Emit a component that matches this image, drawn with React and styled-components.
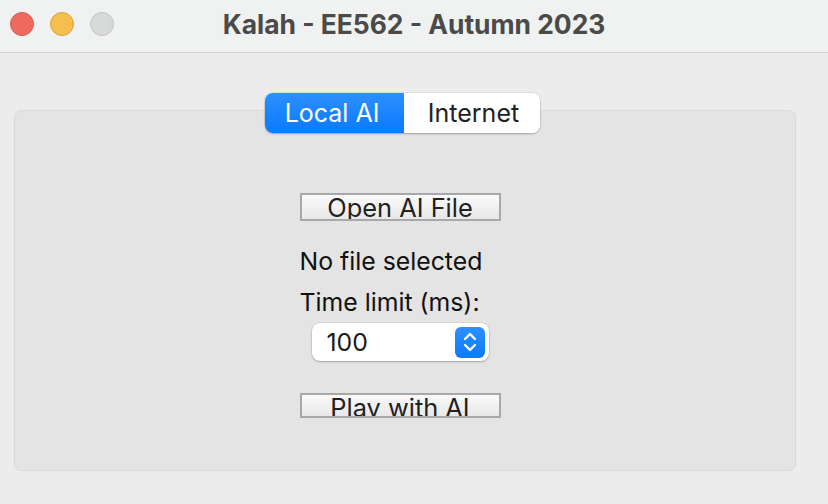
import React from "react";
import styled, { createGlobalStyle } from "styled-components";

const Global = createGlobalStyle`
  html, body { margin: 0; padding: 0; }
  body { background: #ececec; font-family: Inter, "Noto Sans", sans-serif; }
`;

const Win = styled.div`
  width: 828px;
  height: 504px;
  display: flex;
  flex-direction: column;
  background: #ececec;
  overflow: hidden;
`;

const TitleBar = styled.div`
  flex: none;
  display: grid;
  grid-template-columns: 1fr auto 1fr;
  align-items: center;
  padding-bottom: 4px;
  box-sizing: border-box;
  background: #f0f1f1;
  border-bottom: 1px solid #d2d2d2;
  height: 53px;
`;

const Lights = styled.div`
  display: flex;
  gap: 16px;
  padding-left: 10px;
`;

const Light = styled.span`
  width: 24px;
  height: 24px;
  border-radius: 50%;
  box-sizing: border-box;
  background: ${(p) => p.$bg};
  border: 1px solid ${(p) => p.$bd};
`;

const Title = styled.div`
  font-family: Inter, sans-serif;
  font-weight: 700;
  font-size: 26.4px;
  color: #4a4a4a;
  white-space: nowrap;
`;

const Body = styled.div`
  flex: 1;
  display: flex;
  flex-direction: column;
  align-items: center;
  padding: 40px 32px 33px 14px;
`;

const Segmented = styled.div`
  position: relative;
  z-index: 1;
  display: flex;
  height: 40px;
  width: 275px;
  margin-right: 6px;
  margin-bottom: -23px;
  border-radius: 8px;
  background: #fff;
  box-shadow: 0 0 0 0.5px rgba(0, 0, 0, 0.12), 0 1px 2px rgba(0, 0, 0, 0.25);
  overflow: hidden;
`;

const Seg = styled.div`
  box-sizing: border-box;
  flex: ${(p) => (p.$active ? "0 0 139px" : "1")};
  display: flex;
  align-items: center;
  justify-content: center;
  padding: ${(p) => (p.$active ? "0 4px 0 0" : "0 0 0 4px")};
  font-size: 25px;
  color: ${(p) => (p.$active ? "#fff" : "#222")};
  background: ${(p) => (p.$active ? "linear-gradient(#2d8ffd, #0a7aff)" : "#fff")};
`;

const Panel = styled.div`
  align-self: stretch;
  flex: 1;
  background: #e4e4e4;
  border: 1px solid #dadada;
  border-radius: 7px;
  display: flex;
  flex-direction: column;
  align-items: center;
  padding: 82px 10px 0 0;
`;

const Column = styled.div`
  width: 201px;
  display: flex;
  flex-direction: column;
  align-items: flex-start;
`;

const Button = styled.div`
  box-sizing: border-box;
  width: 201px;
  height: ${(p) => p.$h}px;
  border: 2px solid #a8a8a8;
  background: linear-gradient(#fafafa, #e8e8e8);
  display: flex;
  justify-content: center;
  align-items: flex-start;
  overflow: hidden;
  font-size: 25.4px;
  line-height: 25px;
  color: #222;
  white-space: nowrap;
`;

const Label = styled.div`
  font-size: 24.8px;
  color: #111;
  line-height: 41px;
  white-space: nowrap;
`;

const Select = styled.div`
  box-sizing: border-box;
  align-self: center;
  width: 177px;
  height: 38px;
  border-radius: 8px;
  background: #fff;
  box-shadow: 0 0 0 0.5px rgba(0, 0, 0, 0.1), 0 1px 2px rgba(0, 0, 0, 0.25);
  display: flex;
  align-items: center;
  justify-content: space-between;
  padding: 0 4px 0 15px;
  font-size: 24.8px;
  color: #1a1a1a;
`;

const Stepper = styled.div`
  width: 30px;
  height: 31px;
  border-radius: 6px;
  background: linear-gradient(#2e90fd, #0a7aff);
  display: flex;
  align-items: center;
  justify-content: center;
`;

const Spacer = styled.div`
  height: ${(p) => p.$h}px;
`;

export default function App() {
  return (
    <>
      <Global />
      <Win>
        <TitleBar>
          <Lights>
            <Light $bg="#ee6a5f" $bd="#d65a4f" />
            <Light $bg="#f5be4f" $bd="#d9a23e" />
            <Light $bg="#d8d9d9" $bd="#c4c4c4" />
          </Lights>
          <Title>Kalah - EE562 - Autumn 2023</Title>
          <span />
        </TitleBar>
        <Body>
          <Segmented>
            <Seg $active>Local AI</Seg>
            <Seg>Internet</Seg>
          </Segmented>
          <Panel>
            <Column>
              <Button $h={28}>Open AI File</Button>
              <Spacer $h={20} />
              <Label>No file selected</Label>
              <Label>Time limit (ms):</Label>
              <Select>
                100
                <Stepper>
                  <svg width="16" height="24" viewBox="0 0 16 24" fill="none" stroke="#fff" strokeWidth="2.4" strokeLinecap="round" strokeLinejoin="round">
                    <path d="M3 9 L8 4 L13 9" />
                    <path d="M3 15 L8 20 L13 15" />
                  </svg>
                </Stepper>
              </Select>
              <Spacer $h={32} />
              <Button $h={25}>Play with AI</Button>
            </Column>
          </Panel>
        </Body>
      </Win>
    </>
  );
}
